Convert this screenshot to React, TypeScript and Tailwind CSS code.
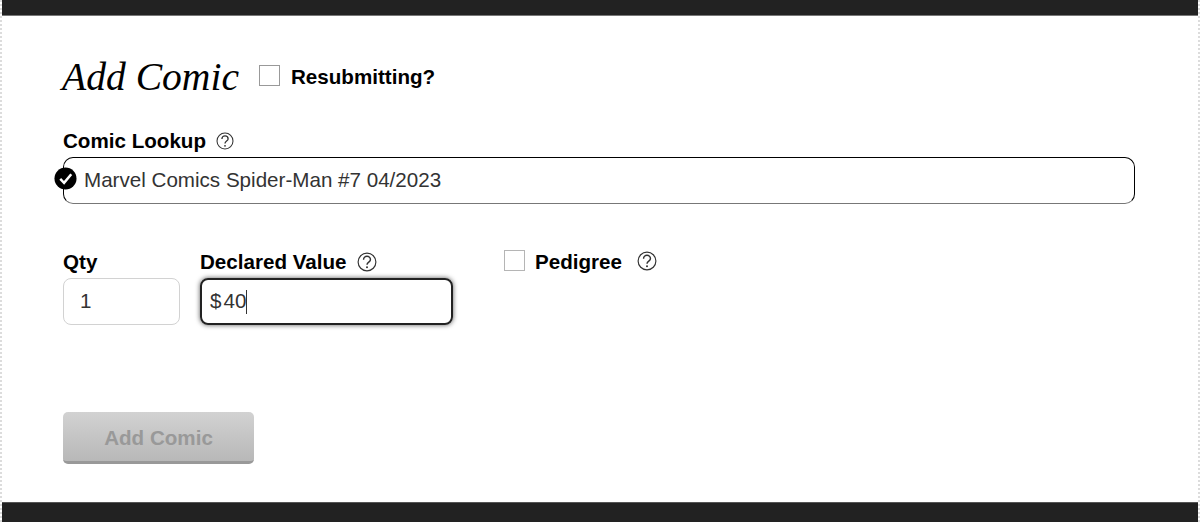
function Help({ size = 18 }: { size?: number }) {
  return (
    <svg width={size} height={size} viewBox="0 0 18 18" fill="none" className="shrink-0">
      <circle cx="9" cy="9" r="8" stroke="#333" strokeWidth="1.05" />
      <path d="M5.9 7a3.1 3.1 0 0 1 6.2 0c0 2-3.1 2.2-3.1 4.4" stroke="#333" strokeWidth="1.3" />
      <circle cx="9" cy="13.8" r="0.9" fill="#333" />
    </svg>
  );
}

export default function App() {
  return (
    <div className="w-[1200px] h-[522px] bg-white flex flex-col overflow-hidden border-x-2 border-dotted border-[#dcdcdc] font-['Liberation_Sans',Arial,sans-serif]">
      <div className="h-[16px] shrink-0 bg-[#222222] border-b border-[#777777]" />
      <div className="flex-1 flex flex-col pl-[60px] pr-[63px]">
        <div className="flex items-center h-[46px] mt-[38px]">
          <h1 className="font-['Liberation_Serif',serif] italic text-[39.6px] leading-[46px] text-black w-[197px]">Add Comic</h1>
          <span className="w-[21px] h-[21px] border border-[#999999] -mt-[4px]" />
          <span className="ml-[11px] text-[20.6px] font-bold text-black leading-6 -mt-[1px]">Resubmitting?</span>
        </div>
        <div className="flex items-center gap-[10px] mt-[29px] ml-[1px] h-6">
          <span className="text-[20.6px] font-bold text-black leading-6">Comic Lookup</span>
          <Help />
        </div>
        <div className="relative mt-[4px] ml-[1px] h-[47px] w-[1072px] rounded-[10px] border border-black border-b-[#777777] flex items-center pl-[20px]">
          <svg width="23" height="23" viewBox="0 0 24 24" className="absolute -left-[10px] top-[9px]">
            <circle cx="12" cy="12" r="11.5" fill="#000" />
            <path d="M6.5 12.5l4 4 7.5-9" stroke="#fff" strokeWidth="2.6" fill="none" />
          </svg>
          <span className="text-[20.6px] text-[#333333] leading-6 -mt-[2px]">Marvel Comics Spider-Man #7 04/2023</span>
        </div>
        <div className="flex mt-[46px] ml-[1px]">
          <div className="w-[117px]">
            <div className="text-[20.6px] font-bold text-black leading-6 h-[28px]">Qty</div>
            <div className="w-[117px] h-[47px] rounded-[8px] border border-[#d2d2d2] flex items-center pl-[16px] text-[20.6px] text-[#333333]">1</div>
          </div>
          <div className="ml-[20px] w-[253px]">
            <div className="flex items-center gap-[10px] h-[24px] mb-[4px]">
              <span className="text-[20.6px] font-bold text-black leading-6">Declared Value</span>
              <Help size={20} />
            </div>
            <div className="w-[253px] h-[47px] rounded-[8px] border-2 border-[#222222] shadow-[0_0_5px_rgba(0,0,0,0.65)] flex items-center pl-[8px] text-[20.6px] text-[#333333]">
              <span className="mr-[2px]">$</span>
              <span>40</span>
              <span className="w-px h-[24px] bg-[#333333]" />
            </div>
          </div>
          <div className="ml-[51px] flex items-start gap-[10px] h-[24px]">
            <span className="w-[21px] h-[21px] border border-[#b5b5b5]" />
            <span className="text-[20.6px] font-bold text-black leading-6">Pedigree</span>
            <span className="ml-[5px] mt-[1px]"><Help size={20} /></span>
          </div>
        </div>
        <button className="mt-[87px] ml-[1px] w-[191px] h-[52px] pt-[4px] rounded-[5px] bg-gradient-to-b from-[#d2d2d2] to-[#b8b8b8] border-b-[3px] border-[#999999] text-[20.6px] font-bold text-[#999999]">Add Comic</button>
      </div>
      <div className="h-[20px] shrink-0 bg-[#222222] border-t border-[#555555]" />
    </div>
  );
}
